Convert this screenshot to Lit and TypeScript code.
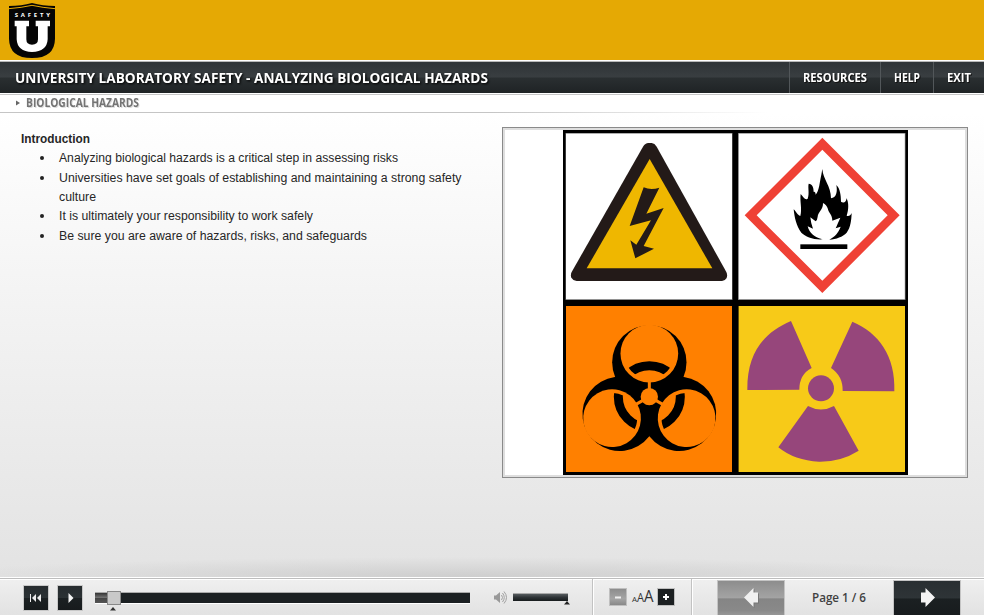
import { LitElement, html, css, svg } from "lit";
import { customElement, property } from "lit/decorators.js";

/** A line of text set to an exact measure. */
@customElement("fit-text")
class FitText extends LitElement {
  @property() text = "";
  @property({ type: Number }) w = 100;
  @property({ type: Number }) h = 16;
  @property({ type: Number }) base = 12;
  static styles = css`
    :host { display: block; flex: none; }
    svg { display: block; overflow: visible; }
    text { fill: currentColor; }
  `;
  render() {
    return html`<svg width=${this.w} height=${this.h}>
      <text x="0" y=${this.base} textLength=${this.w} lengthAdjust="spacingAndGlyphs">${this.text}</text>
    </svg>`;
  }
}

const lobes = [0, 120, 240];

@customElement("hazard-signs")
class HazardSigns extends LitElement {
  static styles = css`
    :host { display: block; width: 345px; height: 345px; }
    svg { display: block; }
  `;
  render() {
    return html`<svg width="345" height="345" viewBox="563 130 345 345">
      <rect x="563" y="130" width="345" height="345" fill="#000" />
      <rect x="565.5" y="133" width="167" height="167" fill="#777" />
      <rect x="566" y="133.6" width="166" height="165.6" fill="#fff" />
      <rect x="738" y="133" width="167.5" height="167" fill="#777" />
      <rect x="738.8" y="133.6" width="166" height="165.6" fill="#fff" />
      <rect x="566" y="306" width="166" height="166" fill="#ff8000" />
      <rect x="738.6" y="306" width="166.4" height="166" fill="#f7ca18" />

      <g transform="translate(555 120) scale(.33333)">
        <path fill="#231a18" d="M264 80Q271 69 280 69H290Q299 70 305 80L514 456Q518 464 515 474Q511 482 501 483H65Q54 482 49 473Q46 464 50 456Z" />
        <path fill="#efb700" d="M284 117L472 445H95Z" />
        <path fill="#231a18" d="M266 202Q288 212 313 203L274 281L326 264L266 378L297 386L241 415L226 361L244 374L288 301L224 318Z" />
      </g>

      <g transform="translate(730 120) scale(.33333)">
        <path fill="#ef4135" fill-rule="evenodd" d="M277 53L509 286L277 519L44 286ZM277 89L80 286L277 482L473 286Z" />
        <path fill="#000" d="M277 147C279 178 303 198 303 235C319 233 323 216 319 195C330 205 333 226 333 245C340 251 351 245 349 234C357 247 356 269 350 287C356 291 362 285 365 279C364 301 362 322 350 338C338 351 319 357 298 359C315 350 325 338 332 320L317 325C322 313 326 305 331 293L307 302C307 283 296 280 293 265C291 258 286 253 279 249C280 268 264 276 263 290Q262 300 257 304L241 292Q243 312 249 326L233 319C238 340 255 353 278 358C251 360 226 350 214 338C199 319 193 290 191 268C198 274 202 286 211 288C217 266 209 245 212 222C220 231 226 243 233 236C239 220 233 203 236 191C247 191 251 202 251 216C254 214 257 218 257 224C268 212 269 185 274 164Z" />
        <rect x="211" y="373" width="141" height="14" fill="#000" />
      </g>

      <defs>
        <mask id="bio" maskUnits="userSpaceOnUse" x="0" y="0" width="600" height="600">
          <rect width="600" height="600" fill="#fff" />
          ${lobes.map((a) => svg`<g transform="rotate(${a} 283 296)">
            <circle cx="283" cy="166.8" r="86.6" fill="#000" />
            <rect x="278.5" y="245" width="9" height="50" fill="#000" /></g>`)}
          <circle cx="283" cy="296" r="26" fill="#000" />
        </mask>
        <clipPath id="arcs">
          ${lobes.map((a) => svg`<circle cx="283" cy="166" r="76" transform="rotate(${a} 283 296)" />`)}
        </clipPath>
      </defs>
      <g transform="translate(555 298) scale(.33333)">
        <g mask="url(#bio)">
          ${lobes.map((a) => svg`<circle cx="283" cy="193" r="111.5" transform="rotate(${a} 283 296)" />`)}
        </g>
        <circle cx="283" cy="296" r="93" fill="none" stroke="#000" stroke-width="27" clip-path="url(#arcs)" />
      </g>

      <g transform="translate(730 298) scale(.33333)" fill="#96467b">
        <circle cx="273" cy="271" r="39" />
        <path d="M183 69L245 210Q208 229 208 275L52 276C51 168 98 105 183 69Z" />
        <path d="M367 71L303 210Q339 234 338 279L493 280C497 174 446 104 367 71Z" />
        <path d="M234 324Q273 345 312 324L386 458Q332 492 267 491Q194 488 145 448Z" />
      </g>
    </svg>`;
  }
}

@customElement("app-root")
class AppRoot extends LitElement {
  static styles = css`
    :host {
      display: flex; flex-direction: column; width: 984px; height: 615px; overflow: hidden;
      font-family: "Open Sans", "Noto Sans", sans-serif; background: #fff;
    }
    * { box-sizing: border-box; }
    svg { display: block; }
    .brand { height: 60px; flex: none; background: #e5a904; padding: 3px 0 0 9px; }
    .brand text { font: 700 18px "Open Sans", sans-serif; fill: #fff; }
    .bar {
      display: flex; height: 35px; flex: none; align-items: stretch; color: #fff; font-weight: 700;
      border-top: 1px solid #fff; border-bottom: 1px solid #c6c6c6; background: #fff;
    }
    .dark {
      display: flex; flex: 1; height: 32px; border-top: 1px solid #b8b8b8;
      background: linear-gradient(#303538 1px, #303538 2px, #393e41 15px, #2a2f31 16px, #1e2224 32px);
    }
    .title { flex: 1; padding: 6px 0 0 15px; font-size: 15px; filter: drop-shadow(1px 1px 1px #000); }
    .nav { border-left: 1px solid #52575a; padding: 7px 13px 0 13px; font-size: 12px; }
    .nav fit-text { filter: drop-shadow(1px 1px 0 #111); }
    .crumb { display: flex; height: 17px; flex: none; gap: 6px; padding: 2px 0 0 16px; color: #747474; background: #fff; font-weight: 700; font-size: 12px; }
    .crumb fit-text { filter: drop-shadow(1px 1px 0 #ddd); }
    .rule { height: 1px; flex: none; background: linear-gradient(90deg, #c5c5c5 0 50%, #fff 78%); }
    .stage {
      display: flex; flex: 1; justify-content: space-between; padding: 14px 16px 0 21px;
      background: radial-gradient(ellipse 540px 20px at 47% 100%, #cecece, #cecece00), linear-gradient(#fff, #f2f2f2 45%, #e3e3e3);
    }
    .copy { font-family: "Liberation Sans", sans-serif; font-size: 12.5px; color: #262626; padding-top: 3px; }
    .copy h1 { margin: 0; font-size: 12.5px; height: 19.2px; }
    .copy ul { list-style: none; margin: 0; padding: 0 0 0 19px; }
    .copy li { display: grid; grid-template-columns: 19px auto; }
    .dot { width: 4px; height: 4px; border-radius: 50%; background: #222; margin-top: 7px; }
    .frame { width: 466px; height: 351px; border: 1px solid #8a8a8a; background: #fff; box-shadow: inset 0 0 0 2px #dedede; padding: 2px 0 0 60px; }
    .foot { display: flex; height: 38px; flex: none; border-top: 1px solid #fff; background: linear-gradient(#bdbdbd 1px, #fff 1px, #fff 2px, #efefef 2px, #e2e2e2); }
    .player { display: flex; width: 592px; padding: 7px 0 0 23px; gap: 8px; }
    .btn { width: 26px; height: 26px; border: 1px solid #c8c8c8; background: linear-gradient(#262b2e, #2b3134 50%, #1b2022 52%, #171b1d); }
    .track { position: relative; width: 375px; height: 12px; margin: 7px 0 0 4px; border-top: 1px solid #aaa; border-bottom: 1px solid #fff; background: #1b2022; }
    .done { width: 14px; height: 10px; background: linear-gradient(#333, #777 50%, #444 52%, #555); }
    .thumb { position: absolute; left: 12px; top: -2px; width: 14px; height: 14px; background: #c9c9c9; border: 1px solid #888; }
    .tri { position: absolute; left: 15px; top: 14px; }
    .spk { margin: 6px 0 0 16px; }
    .vol { position: relative; width: 55px; height: 8px; margin: 8px 0 0 -3px; border-top: 1px solid #aaa; background: linear-gradient(#555b5e, #2d3235 50%, #171b1d); }
    .vol .tri { left: 51px; top: 7px; }
    .size { display: flex; width: 99px; margin-top: 1px; padding: 9px 0 0 16px; border-left: 1px solid #c2c2c2; box-shadow: inset 1px 0 #fff; }
    .sq { width: 18px; height: 18px; border: 1px solid #bfbfbf; background: #1c2022; flex: none; }
    .off { background: linear-gradient(#8d8d8d, #a5a5a5 60%, #888); }
    .aaa { margin: 0 3px 0 5px; overflow: visible; }
    .aaa text { font-weight: 400; fill: #333; }
    .pager { display: flex; flex: 1; margin-top: 1px; border-left: 1px solid #c2c2c2; box-shadow: inset 1px 0 #fff; padding: 1px 0 0 25px; }
    .go { width: 68px; height: 37px; border: 1px solid #c4c4c4; border-bottom: 0; background: linear-gradient(#292e31, #2e3437 47%, #1b2022 50%, #171b1d); }
    .dim { background: linear-gradient(#8d8d8d, #a3a3a3 46%, #858585 50%, #898989 82%, #9c9c9c); }
    .page { padding: 8px 27px 0 27px; font-size: 12.5px; font-weight: 600; color: #404040; }
  `;

  bullets: [string, number][][] = [
    [["Analyzing biological hazards is a critical step in assessing risks", 339]],
    [["Universities have set goals of establishing and maintaining a strong safety", 402.5], ["culture", 37]],
    [["It is ultimately your responsibility to work safely", 254]],
    [["Be sure you are aware of hazards, risks, and safeguards", 308]],
  ];

  render() {
    return html`
      <div class="brand">
        <svg width="47" height="56" viewBox="27 9 141 168">
          <path fill="#050505" d="M27 18Q65 18 96 9Q128 18 165 18V116Q164 174 96 174Q28 174 27 116Z" />
          <path fill="none" stroke="#e5a904" stroke-width="3" d="M27 26Q65 23 96 16Q128 23 165 26" />
          <text x="44" y="50" textLength="106">SAFETY</text>
          <path fill="#fff" d="M44 62H87V79H79V118Q79 134 96 134Q114 134 114 118V79H107V62H150V79H143V118Q141 155 96 156Q52 155 50 118V79H44Z" />
        </svg>
      </div>
      <div class="bar"><div class="dark">
        <div class="title"><fit-text text="UNIVERSITY LABORATORY SAFETY - ANALYZING BIOLOGICAL HAZARDS" w="473" h="20" base="15"></fit-text></div>
        <div class="nav"><fit-text text="RESOURCES" w="64" h="18" base="13"></fit-text></div>
        <div class="nav"><fit-text text="HELP" w="26" h="18" base="13"></fit-text></div>
        <div class="nav"><fit-text text="EXIT" w="24" h="18" base="13"></fit-text></div>
      </div></div>
      <div class="crumb">
        <svg width="4" height="12"><path d="M0 3.5L4 6L0 8.5Z" fill="#666" /></svg>
        <fit-text text="BIOLOGICAL HAZARDS" w="113" h="14" base="10"></fit-text>
      </div>
      <div class="rule"></div>
      <div class="stage">
        <div class="copy">
          <h1><fit-text text="Introduction" w="69" h="19" base="13"></fit-text></h1>
          <ul>${this.bullets.map((b) => html`<li><span class="dot"></span>
            <div>${b.map(([t, w]) => html`<fit-text text=${t} w=${w} h="19.35" base="13"></fit-text>`)}</div></li>`)}</ul>
        </div>
        <div class="frame"><hazard-signs></hazard-signs></div>
      </div>
      <div class="foot">
        <div class="player">
          <div class="btn"><svg width="24" height="24"><path fill="#eee" d="M6 8h1v8H6zM12 8v8l-4-4zM17 8v8l-4-4z" /></svg></div>
          <div class="btn"><svg width="24" height="24"><path fill="#f4f4f4" d="M10.5 7L15.5 12L10.5 17Z" /></svg></div>
          <div class="track"><div class="done"></div><div class="thumb"></div>
            <svg class="tri" width="6" height="4"><path d="M3 0L6 3.5H0Z" fill="#333" /></svg></div>
          <svg class="spk" width="14" height="13"><path fill="#999" d="M0 4.5h2L6 1v11L2 8.5H0z" />
            <path fill="none" stroke="#a0a0a0" d="M7.5 4Q9.5 6.5 7.5 9M8.5 2Q12 6.5 8.5 11M10 .5Q15 6.5 10 12.5" /></svg>
          <div class="vol"><svg class="tri" width="6" height="4"><path d="M3 0L6 3.5H0Z" fill="#222" /></svg></div>
        </div>
        <div class="size">
          <div class="sq off"><svg width="16" height="16"><path d="M5 7.5h6v2H5z" fill="#eee" /></svg></div>
          <svg class="aaa" width="22" height="18">
            <text x="0" y="14" font-size="8" textLength="5" lengthAdjust="spacingAndGlyphs">A</text>
            <text x="5" y="14" font-size="12" textLength="7" lengthAdjust="spacingAndGlyphs">A</text>
            <text x="12" y="14" font-size="16" textLength="9.5" lengthAdjust="spacingAndGlyphs">A</text>
          </svg>
          <div class="sq"><svg width="16" height="16"><path d="M5 7h2V5h2v2h2v2H9v2H7V9H5z" fill="#fff" /></svg></div>
        </div>
        <div class="pager">
          <div class="go dim"><svg width="66" height="36"><path d="M27 17.5L36.5 8V12.5H41V22.5H36.5V27Z" fill="#777" /><path d="M26 16.5L35.5 7V11.5H40V21.5H35.5V26Z" fill="#f0f0f0" /></svg></div>
          <div class="page"><fit-text text="Page 1 / 6" w="54" h="20" base="14"></fit-text></div>
          <div class="go"><svg width="66" height="36"><path d="M41 16.5L31.5 7V11.5H27V21.5H31.5V26Z" fill="#f4f4f4" /></svg></div>
        </div>
      </div>`;
  }
}
